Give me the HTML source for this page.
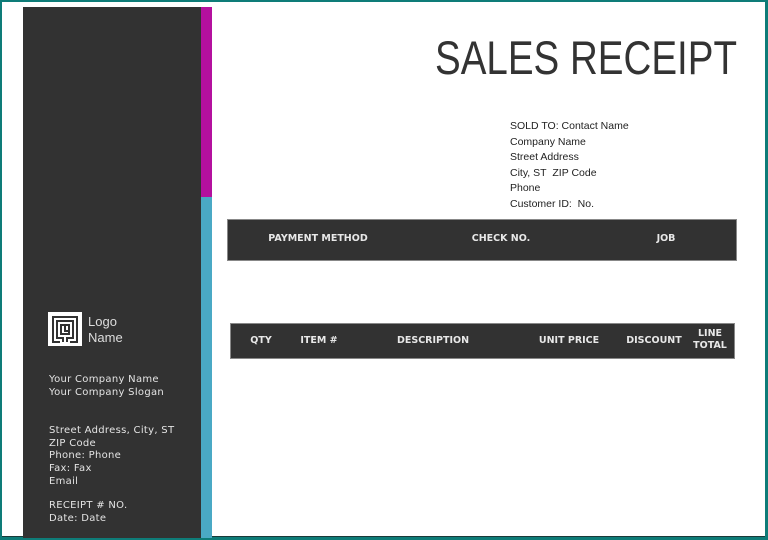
<!DOCTYPE html>
<html><head><style>
*{margin:0;padding:0;box-sizing:border-box}
body{width:768px;height:540px;background:#0e7c78;position:relative;overflow:hidden;font-family:"DejaVu Sans","Liberation Sans",sans-serif}
.page{position:absolute;left:2px;top:2px;width:763px;height:535px;background:#fff;border-bottom:1px solid #1a3a3a}
.side{position:absolute;left:23px;top:7px;width:178px;height:531px;background:#323232}
.mag{position:absolute;left:201px;top:7px;width:11px;height:190px;background:#b4109e}
.blu{position:absolute;left:201px;top:197px;width:11px;height:341px;background:#4aa9c5}
.t{position:absolute;color:#e4e4e4;font-size:10px;line-height:12.7px;letter-spacing:0.3px}
h1{position:absolute;left:435px;top:34px;font-family:"Liberation Sans",sans-serif;font-weight:normal;font-size:47px;line-height:1;color:#333;white-space:nowrap;transform:scaleX(0.82);transform-origin:0 0}
.sold{position:absolute;left:510px;top:119px;font-family:"Liberation Sans",sans-serif;font-size:10.5px;line-height:15.5px;color:#222}
.bar{position:absolute;background:#323232;color:#e8e8e8;font-size:9.5px;font-weight:bold;border:1px solid #888}
.bar span{position:absolute;transform:translateX(-50%);white-space:nowrap;text-align:center;line-height:12px}
</style></head><body>
<div class="page"></div>
<div class="side"></div>
<div class="mag"></div><div class="blu"></div>
<svg style="position:absolute;left:48px;top:312px" width="34" height="34" viewBox="0 0 34 34">
<rect x="0" y="0" width="34" height="34" fill="#fff"/>
<g fill="none" stroke="#323232" stroke-width="2">
<path d="M12 30H5V5h24v25h-7"/>
<path d="M15 30v-4H9V9h16v17h-6v4"/>
<path d="M13 22V13h8v9z"/>
<path d="M17 12v7h3"/>
</g></svg>
<div class="t" style="left:88px;top:314px;font-family:'Liberation Sans',sans-serif;font-size:13px;line-height:16px;color:#ddd;letter-spacing:0">Logo<br>Name</div>
<div class="t" style="left:49px;top:374px">Your Company Name<br>Your Company Slogan</div>
<div class="t" style="left:49px;top:425px">Street Address, City, ST<br>ZIP Code<br>Phone: Phone<br>Fax: Fax<br>Email</div>
<div class="t" style="left:49px;top:500px">RECEIPT # NO.<br>Date: Date</div>
<h1>SALES RECEIPT</h1>
<div class="sold">SOLD TO: Contact Name<br>Company Name<br>Street Address<br>City, ST&nbsp; ZIP Code<br>Phone<br>Customer ID:&nbsp; No.</div>
<div class="bar" style="left:227px;top:219px;width:510px;height:42px">
<span style="left:90px;top:13px">PAYMENT METHOD</span>
<span style="left:273px;top:13px">CHECK NO.</span>
<span style="left:438px;top:13px">JOB</span></div>
<div class="bar" style="left:230px;top:323px;width:505px;height:36px">
<span style="left:30px;top:11px">QTY</span>
<span style="left:88px;top:11px">ITEM #</span>
<span style="left:202px;top:11px">DESCRIPTION</span>
<span style="left:338px;top:11px">UNIT PRICE</span>
<span style="left:423px;top:11px">DISCOUNT</span>
<span style="left:479px;top:4px">LINE<br>TOTAL</span></div>
</body></html>
